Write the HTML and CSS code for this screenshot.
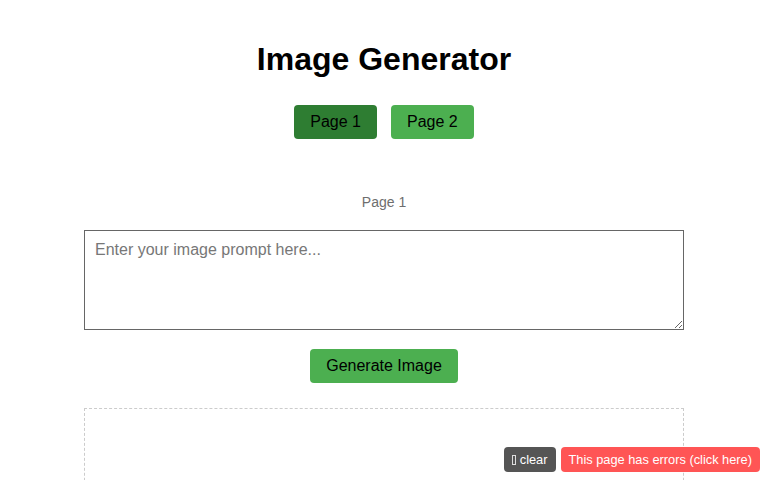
FILE: index.html
```html
<!DOCTYPE html>
<html lang="en">
<head>
    <meta charset="UTF-8">
    <meta name="viewport" content="width=device-width, initial-scale=1.0">
    <title>Image Generator</title>
    <link rel="stylesheet" href="styles.css">
</head>
<body>
    <div class="container">
        <h1 class="title">Image Generator</h1>
        <div class="nav">
            <button class="nav-btn active">Page 1</button>
            <button class="nav-btn">Page 2</button>
        </div>
        <div class="page">
            <p class="page-label">Page 1</p>
            <textarea class="prompt" placeholder="Enter your image prompt here..."></textarea>
            <div class="actions">
                <button class="generate-btn">Generate Image</button>
            </div>
            <div class="result"></div>
        </div>
    </div>

    <div class="error-bar">
        <button class="clear-btn"><span class="tofu"></span> clear</button>
        <button class="error-btn">This page has errors (click here)</button>
    </div>
</body>
</html>
```
FILE: styles.css
```css
body {
    margin: 0;
    font-family: 'Liberation Sans', Arial, sans-serif;
    background: #fff;
    color: #000;
}

.container {
    max-width: 600px;
    margin: 0 auto;
    padding: 20px;
}

.title {
    text-align: center;
    font-size: 32px;
    margin: 21px 0 22px;
}

.nav {
    text-align: center;
    font-size: 0;
}

.nav-btn {
    background: #4caf50;
    color: #000;
    border: none;
    border-radius: 4px;
    padding: 8px 16px;
    margin: 5px 7px;
    font-family: inherit;
    font-size: 16px;
    cursor: pointer;
}

.nav-btn.active {
    background: #2e7d32;
}

.page {
    margin-top: 50px;
}

.page-label {
    text-align: center;
    color: #6e6e6e;
    font-size: 14px;
    margin: 0 0 20px;
}

.prompt {
    display: block;
    width: 100%;
    height: 100px;
    box-sizing: border-box;
    padding: 10px;
    border: 1px solid #666;
    font-family: inherit;
    font-size: 16px;
    resize: vertical;
    margin: 0;
}

.prompt::placeholder {
    color: #777;
}

.actions {
    text-align: center;
    margin-top: 19px;
}

.generate-btn {
    background: #4caf50;
    color: #000;
    border: none;
    border-radius: 4px;
    padding: 8px 16px;
    font-family: inherit;
    font-size: 16px;
    cursor: pointer;
}

.result {
    margin-top: 25px;
    min-height: 300px;
    border: 1px dashed #ccc;
}

.error-bar {
    position: fixed;
    right: 8px;
    bottom: 8px;
    display: flex;
    gap: 5px;
}

.clear-btn,
.error-btn {
    border: none;
    border-radius: 4px;
    color: #fff;
    font-family: inherit;
    font-size: 12.8px;
    padding: 5px 8px;
    height: 25px;
}

.clear-btn {
    background: #555;
}

.error-btn {
    background: #ff5555;
}

.tofu {
    display: inline-block;
    width: 2px;
    height: 8px;
    border: 1px solid #ddd;
    vertical-align: -1px;
}
```
